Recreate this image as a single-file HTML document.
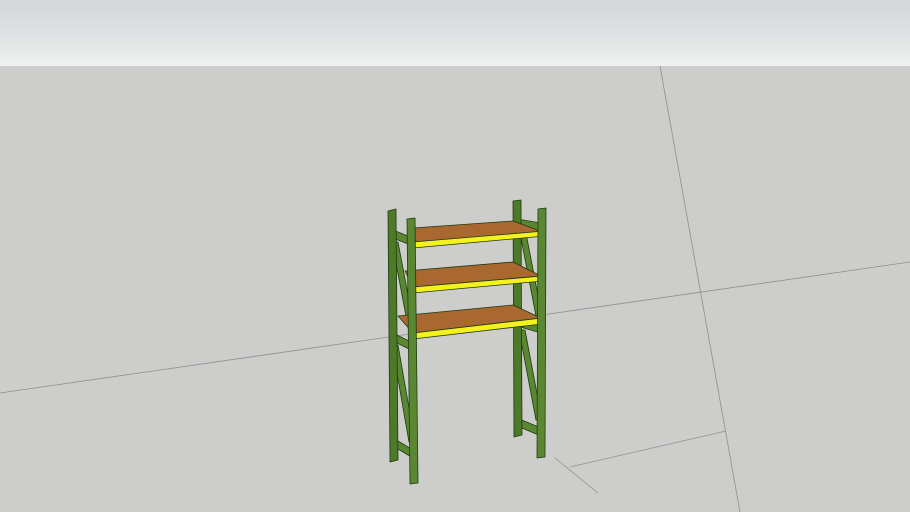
<!DOCTYPE html>
<html><head><style>
html,body{margin:0;padding:0;width:910px;height:512px;overflow:hidden;background:#cdcdcb}
.top{position:absolute;left:0;top:0;width:910px;height:66px;background:linear-gradient(#d3d7da,#dfe2e2 55%,#f0f1f1)}
svg{position:absolute;left:0;top:0}
</style></head><body>
<div class="top"></div>
<svg width="910" height="512" viewBox="0 0 910 512">
<g stroke="#8f8f8f" stroke-width="0.8" fill="none">
<line x1="660" y1="66" x2="740" y2="512"/>
<line x1="0" y1="393" x2="910" y2="262"/>
<line x1="570" y1="467" x2="726" y2="431"/>
<line x1="555" y1="458" x2="598" y2="493"/>
</g>
<g stroke="#1f3a10" stroke-width="0.8" stroke-linejoin="round">
<g fill="#5a8832">
<polygon points="393,230 413,238 413,246 393,238"/>
<polygon points="392,242 409,332 415,332 398,242"/>
<polygon points="393,333 413,343 413,351 393,341"/>
<polygon points="392,345 409,442 415,442 398,345"/>
<polygon points="393,438 413,450 413,458 393,446"/>
<polygon points="517,219 541,223 541,231 517,227"/>
<polygon points="519,228 536,316 542,316 525,228"/>
<polygon points="517,318 541,325 541,333 517,326"/>
<polygon points="519,330 536,420 542,420 525,330"/>
<polygon points="517,418 541,428 541,436 517,426"/>
</g>
<polygon points="388,211 396,209 398,460 390,462" fill="#4c7a28"/>
<polygon points="513,201 521,200 522,435 514,437" fill="#4c7a28"/>
<polygon points="413,228 513,221 543,232 413,242" fill="#a8682f"/>
<polygon points="405,271 513,262 541,276 413,287" fill="#a8682f"/>
<polygon points="398,316 513,305 541,318 413,333" fill="#a8682f"/>
<polygon points="413,242 545,231 545,236 413,248" fill="#f4f21e"/>
<polygon points="413,287 543,276 543,281 413,293" fill="#f4f21e"/>
<polygon points="413,333 542,318 542,324 413,339" fill="#f4f21e"/>
<polygon points="407,219 415,218 418,483 410,484" fill="#5a8832"/>
<polygon points="538,209 546,208 545,457 537,458" fill="#5a8832"/>
</g>
</svg>
</body></html>
